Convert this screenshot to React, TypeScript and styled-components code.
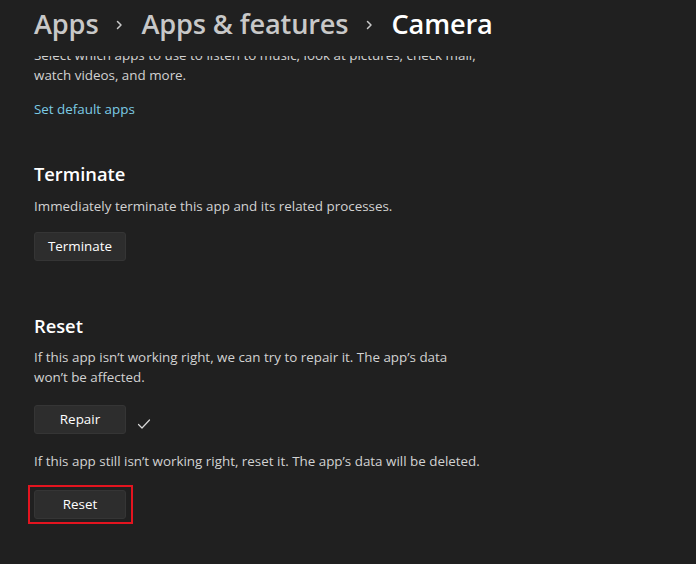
import React from "react";
import styled, { createGlobalStyle } from "styled-components";

const GlobalStyle = createGlobalStyle`
  html, body {
    margin: 0;
    padding: 0;
    background: #202020;
  }
  body {
    font-family: "Open Sans", "Noto Sans", "Liberation Sans", sans-serif;
    -webkit-font-smoothing: antialiased;
  }
`;

const Page = styled.div`
  width: 696px;
  height: 564px;
  display: flex;
  flex-direction: column;
  background: #202020;
  overflow: hidden;
`;

const Header = styled.header`
  height: 56px;
  flex: none;
  display: flex;
  align-items: flex-start;
  padding-left: 34px;
  background: #202020;
`;

const Crumb = styled.span<{ current?: boolean }>`
  font-size: 27.2px;
  line-height: 48px;
  font-weight: 600;
  letter-spacing: -0.15px;
  color: ${(props) => (props.current ? "#ffffff" : "#c8c8c8")};
  white-space: nowrap;
`;

const Sep = styled.span`
  display: flex;
  align-items: center;
  height: 48px;
  padding: 0 18px 0 18px;
  margin-top: 1px;
`;

const Content = styled.main`
  flex: 1;
  overflow: hidden;
  padding-left: 34px;
  display: flex;
  flex-direction: column;
  align-items: flex-start;
`;

const Text = styled.p<{ top?: number; nowrap?: boolean }>`
  margin: ${(props) => props.top ?? 0}px 0 0;
  font-size: 13.4px;
  line-height: 20px;
  color: #d2d2d2;
  max-width: 446px;
  white-space: ${(props) => (props.nowrap ? "nowrap" : "normal")};
`;

const Link = styled.a`
  margin-top: 14px;
  font-size: 13.4px;
  line-height: 20px;
  color: #7ccbe4;
  text-decoration: none;
  cursor: pointer;
`;

const Heading = styled.h2<{ top: number }>`
  margin: ${(props) => props.top}px 0 0;
  font-size: 18.3px;
  line-height: 28px;
  font-weight: 600;
  color: #ffffff;
`;

const ActionRow = styled.div<{ top: number }>`
  margin-top: ${(props) => props.top}px;
  display: flex;
  align-items: center;
  gap: 11px;
`;

const Button = styled.button`
  width: 92px;
  height: 29px;
  box-sizing: border-box;
  background: #2d2d2d;
  border: 1px solid #353535;
  border-radius: 3px;
  color: #ffffff;
  font-family: inherit;
  font-size: 13.4px;
  padding: 0 0 1px;
  cursor: pointer;
`;

const Highlight = styled.div`
  padding: 3px 5px 3px 4px;
  margin-left: -6px;
  border: 2px solid #e3141f;
  display: flex;
`;

const Check = () => (
  <svg width="14" height="12" viewBox="0 0 14 12" style={{ marginTop: 8 }}>
    <path d="M1.5 6.5 L5 10 L12.5 2" fill="none" stroke="#d8d8d8" strokeWidth="1.2" strokeLinecap="round" strokeLinejoin="round" />
  </svg>
);

const Chevron = () => (
  <svg width="7" height="10" viewBox="0 0 7 10">
    <path d="M1.5 1.5 L5 5 L1.5 8.5" fill="none" stroke="#c8c8c8" strokeWidth="1.5" strokeLinecap="round" strokeLinejoin="round" />
  </svg>
);

export default function App() {
  return (
    <Page>
      <GlobalStyle />
      <Header>
        <Crumb>Apps</Crumb>
        <Sep>
          <Chevron />
        </Sep>
        <Crumb>Apps &amp; features</Crumb>
        <Sep>
          <Chevron />
        </Sep>
        <Crumb current>Camera</Crumb>
      </Header>
      <Content>
        <Text top={-11}>
          Select which apps to use to listen to music, look at pictures, check mail, watch videos, and more.
        </Text>
        <Link>Set default apps</Link>

        <Heading top={41}>Terminate</Heading>
        <Text top={8}>Immediately terminate this app and its related processes.</Text>
        <ActionRow top={16}>
          <Button>Terminate</Button>
        </ActionRow>

        <Heading top={51}>Reset</Heading>
        <Text top={7}>If this app isn&rsquo;t working right, we can try to repair it. The app&rsquo;s data won&rsquo;t be affected.</Text>
        <ActionRow top={18}>
          <Button>Repair</Button>
          <Check />
        </ActionRow>
        <Text top={17} nowrap>
          If this app still isn&rsquo;t working right, reset it. The app&rsquo;s data will be deleted.
        </Text>
        <ActionRow top={14}>
          <Highlight>
            <Button>Reset</Button>
          </Highlight>
        </ActionRow>
      </Content>
    </Page>
  );
}
